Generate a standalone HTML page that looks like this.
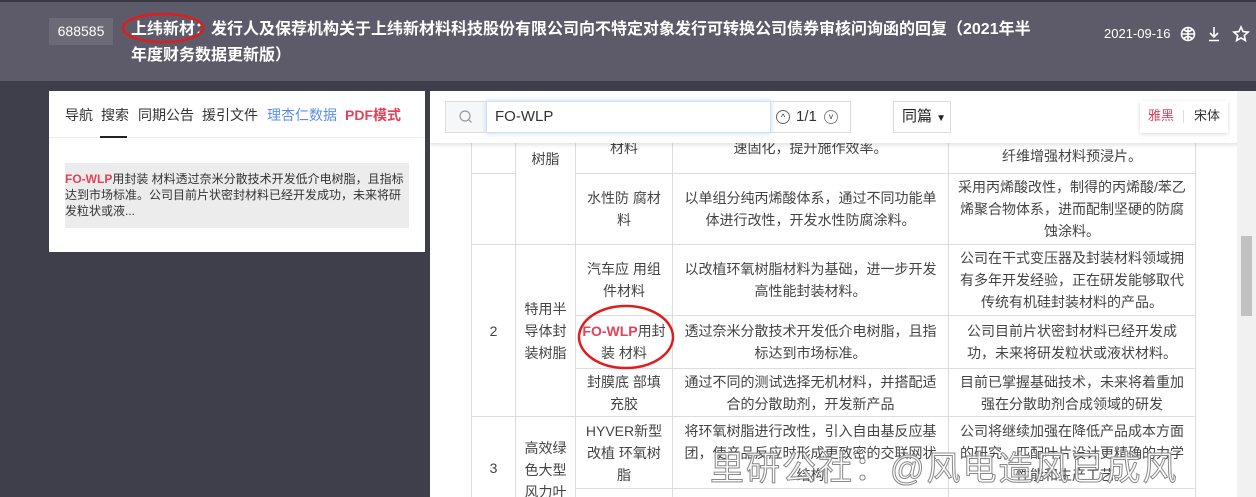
<!DOCTYPE html>
<html><head><meta charset="utf-8"><style>
*{margin:0;padding:0;box-sizing:border-box}
body{width:1256px;height:497px;overflow:hidden;background:#3f3e4b;font-family:"Liberation Sans","Noto Sans CJK SC",sans-serif;position:relative}
.hdr{position:absolute;left:0;top:0;width:1256px;height:81px;background:#5d5b69;border-top:2px solid #3a3944}
.code{position:absolute;left:49px;top:16px;width:64px;height:27px;background:#6c6a77;color:#fff;font-size:14px;line-height:27px;text-align:center}
.title{position:absolute;left:131px;top:15px;width:912px;color:#fff;font-size:16px;font-weight:bold;line-height:26px}
.date{position:absolute;left:1104px;top:24px;color:#fff;font-size:13px}
.lp{position:absolute;left:49px;top:91px;width:376px;height:161px;background:#fff}
.tabs{height:47px;border-bottom:1px solid #eee;font-size:14px;position:relative}
.tabs span{position:absolute;top:14px;color:#333;white-space:nowrap}
.snip{position:absolute;left:16px;top:72px;width:344px;height:65px;background:#ececec;font-size:12px;line-height:16px;color:#333;padding:8px 0 0 0}
.rp{position:absolute;left:430px;top:91px;width:826px;height:406px;background:#fff;overflow:hidden}
.bar{position:absolute;left:0;top:0;width:826px;height:52px;background:#fff;box-shadow:0 2px 4px rgba(0,0,0,.12);z-index:2}
table{position:absolute;left:41px;top:16px;border-collapse:collapse;font-size:14px;color:#444;text-align:center;line-height:22px;table-layout:fixed}
td{border:1px solid #ddd;padding:0 8px;overflow:hidden}
.red{color:#e0435a;font-weight:bold}
.sb{position:absolute;left:807px;top:0;width:19px;height:406px;background:#f1f1f1;z-index:3}
.sb div{position:absolute;left:4px;top:145px;width:11px;height:80px;background:#c1c1c1}
</style></head><body>
<div class="hdr">
<div class="code">688585</div>
<div class="title">上纬新材：发行人及保荐机构关于上纬新材料科技股份有限公司向不特定对象发行可转换公司债券审核问询函的回复（2021年半年度财务数据更新版）</div>
<svg style="position:absolute;left:120px;top:8px" width="86" height="36"><ellipse cx="43" cy="18" rx="40" ry="14" fill="none" stroke="#e01c1c" stroke-width="2.5"/></svg>
<div class="date">2021-09-16</div>
<svg style="position:absolute;left:1180px;top:23px" width="70" height="18" fill="none" stroke="#fff" stroke-width="1.6"><circle cx="8" cy="9" r="6.5"/><path d="M1.5 9h13M8 2.5v13M4 4.5q4 4 8 0M4 13.5q4-4 8 0"/><path d="M34 2v10M30 8l4 4 4-4M29 15.5h10"/><path d="M61 2l2.1 4.6 5 .5-3.8 3.4 1.1 5-4.4-2.6-4.4 2.6 1.1-5-3.8-3.4 5-.5z"/></svg>
</div>
<div class="lp">
<div class="tabs"><span style="left:16px">导航</span><span style="left:52px">搜索</span><i style="position:absolute;left:51px;top:45px;width:27px;height:2px;background:#222"></i><span style="left:89px">同期公告</span><span style="left:153px">援引文件</span><span style="left:218px;color:#5b8ef0">理杏仁数据</span><span style="left:296px;color:#e0435a;font-weight:bold">PDF模式</span></div>
<div class="snip"><span class="red">FO-WLP</span>用封装 材料透过奈米分散技术开发低介电树脂，且指标达到市场标准。公司目前片状密封材料已经开发成功，未来将研发粒状或液...</div>
</div>
<div class="rp">
<div class="bar">
<div style="position:absolute;left:15px;top:10px;width:42px;height:32px;border:1px solid #ddd;background:#f6f7f9"><svg width="40" height="30"><circle cx="19" cy="14" r="5" fill="none" stroke="#999" stroke-width="1.2"/><path d="M22.5 17.5l3 3" stroke="#999" stroke-width="1.2"/></svg></div>
<div style="position:absolute;left:56px;top:10px;width:285px;height:32px;border:1px solid #cfe0f5;box-shadow:0 0 5px #bcd7f4;font-size:15px;line-height:30px;padding-left:8px;color:#333">FO-WLP</div>
<div style="position:absolute;left:341px;top:10px;width:80px;height:32px;border:1px solid #ddd;border-left:none;font-size:15px;line-height:30px;color:#333"><span style="position:absolute;left:5px;top:8px;width:14px;height:14px;border:1px solid #666;border-radius:50%;font-size:9px;line-height:12px;text-align:center">^</span><span style="position:absolute;left:25px">1/1</span><span style="position:absolute;left:53px;top:8px;width:14px;height:14px;border:1px solid #888;border-radius:50%;font-size:8px;line-height:12px;text-align:center">v</span></div>
<div style="position:absolute;left:463px;top:10px;width:58px;height:32px;border:1px solid #ddd;font-size:15px;line-height:30px;padding-left:8px;color:#222">同篇 <b style="font-size:10px">&#9660;</b></div>
<div style="position:absolute;left:710px;top:10px;width:88px;height:32px;box-shadow:0 1px 4px rgba(0,0,0,.15);font-size:13px;line-height:30px;color:#333"><span style="position:absolute;left:8px;color:#e0435a">雅黑</span><span style="position:absolute;left:43px;top:9px;width:1px;height:13px;background:#ddd"></span><span style="position:absolute;left:54px">宋体</span></div>
</div>
<table>
<colgroup><col style="width:44px"><col style="width:60px"><col style="width:97px"><col style="width:276px"><col style="width:247px"></colgroup>
<tr style="height:66px"><td></td><td rowspan="2" style="vertical-align:top;padding-top:40px;padding-left:4px;padding-right:4px">树脂</td><td style="vertical-align:bottom;padding-bottom:14px">材料</td><td style="vertical-align:bottom;padding-bottom:14px">速固化，提升施作效率。</td><td style="vertical-align:bottom;padding-bottom:6px">纤维增强材料预浸片。</td></tr>
<tr style="height:71px"><td></td><td>水性防 腐材料</td><td>以单组分纯丙烯酸体系，通过不同功能单体进行改性，开发水性防腐涂料。</td><td>采用丙烯酸改性，制得的丙烯酸/苯乙烯聚合物体系，进而配制坚硬的防腐蚀涂料。</td></tr>
<tr style="height:71px"><td rowspan="3">2</td><td rowspan="3" style="padding:0 4px">特用半导体封装树脂</td><td>汽车应 用组件材料</td><td>以改植环氧树脂材料为基础，进一步开发高性能封装材料。</td><td>公司在干式变压器及封装材料领域拥有多年开发经验，正在研发能够取代传统有机硅封装材料的产品。</td></tr>
<tr style="height:53px"><td style="padding:0 3px"><span class="red">FO-WLP</span>用封装 材料</td><td>透过奈米分散技术开发低介电树脂，且指标达到市场标准。</td><td>公司目前片状密封材料已经开发成功，未来将研发粒状或液状材料。</td></tr>
<tr style="height:48px"><td>封膜底 部填充胶</td><td>通过不同的测试选择无机材料，并搭配适合的分散助剂，开发新产品</td><td>目前已掌握基础技术，未来将着重加强在分散助剂合成领域的研发</td></tr>
<tr style="height:72px"><td rowspan="2">3</td><td rowspan="2" style="vertical-align:top;padding:20px 4px 0">高效绿色大型风力叶</td><td style="padding:0 9px">HYVER新型改植 环氧树脂</td><td>将环氧树脂进行改性，引入自由基反应基团，使产品反应时形成更致密的交联网状结构</td><td>公司将继续加强在降低产品成本方面的研究，匹配叶片设计更精确的力学性能和生产工艺。</td></tr>
<tr style="height:30px"><td></td><td></td><td></td></tr>
</table>
<svg style="position:absolute;left:146px;top:212px" width="100" height="68"><ellipse cx="50" cy="34" rx="47" ry="31" fill="none" stroke="#e01c1c" stroke-width="2.5"/></svg>
<div style="position:absolute;left:280px;top:350px;font-size:34px;color:rgba(255,255,255,.8);-webkit-text-stroke:1px #888;white-space:nowrap;letter-spacing:2px">里研公社：@风电造风已成风</div>
<div class="sb"><div></div></div>
</div>
</body></html>
